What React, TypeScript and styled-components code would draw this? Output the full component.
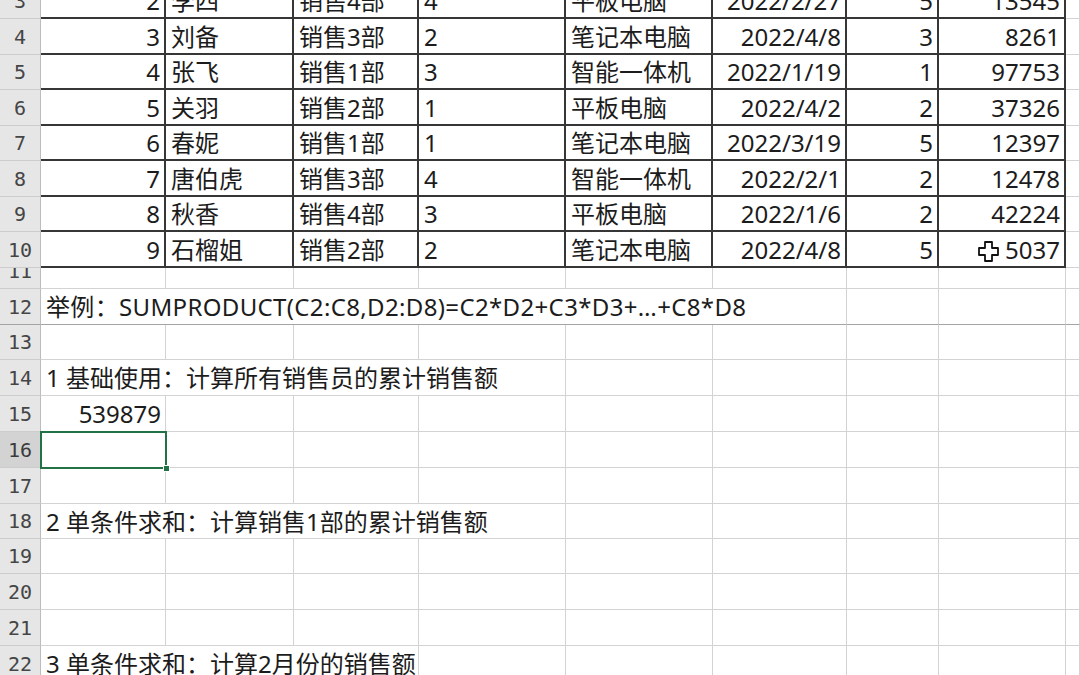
import React from 'react';
import styled, { createGlobalStyle, css } from 'styled-components';

const GlobalStyle = createGlobalStyle`
  html, body { margin: 0; padding: 0; background: #fff; overflow: hidden; }
  body { width: 1080px; height: 675px; }
`;

const COLS = '41px 125px 128px 125px 147px 147px 134px 92px 127px 1fr';

type Edge = 'dark' | 'light' | 'mid' | 'none';

const edge = (e: Edge) => {
  switch (e) {
    case 'dark':
      return '2px solid #363636';
    case 'mid':
      return '1px solid #a4a4a4';
    case 'none':
      return '0';
    default:
      return '1px solid #d3d3d3';
  }
};

const Viewport = styled.div`
  width: 1080px;
  height: 675px;
  overflow: hidden;
  background: #fff;
`;

const Sheet = styled.div`
  display: flex;
  flex-direction: column;
  margin-top: -17px;
  font-family: "Noto Sans", "Noto Sans CJK SC", sans-serif;
  font-size: 24px;
  color: #1c1c1c;
`;

const Row = styled.div<{ $h: number }>`
  display: grid;
  grid-template-columns: ${COLS};
  height: ${(p) => p.$h}px;
  flex: none;
`;

const RowHead = styled.div<{ $sel?: boolean; $bottom?: Edge }>`
  display: flex;
  align-items: flex-end;
  justify-content: center;
  box-sizing: border-box;
  padding-bottom: 7px;
  overflow: hidden;
  background: ${(p) => (p.$sel ? '#d3d3d3' : '#e6e6e6')};
  border-right: 1px solid #bcbcbc;
  border-bottom: ${(p) => (p.$bottom === 'mid' ? '1px solid #a4a4a4' : '1px solid #cccccc')};
  font-family: "DejaVu Sans Mono", monospace;
  font-size: 20px;
  line-height: 20px;
  color: ${(p) => (p.$sel ? '#3b3b3b' : '#454545')};
`;

const Cell = styled.div<{
  $align?: 'left' | 'right';
  $right?: Edge;
  $bottom?: Edge;
  $span?: number;
  $selected?: boolean;
  $track?: number;
}>`
  position: relative;
  box-sizing: border-box;
  display: flex;
  align-items: center;
  justify-content: ${(p) => (p.$align === 'right' ? 'flex-end' : 'flex-start')};
  padding: 1px 4px 0 5px;
  white-space: nowrap;
  line-height: 1;
  min-width: 0;
  letter-spacing: ${(p) => p.$track ?? 0}px;
  grid-column: span ${(p) => p.$span ?? 1};
  border-right: ${(p) => edge(p.$right ?? 'light')};
  border-bottom: ${(p) => edge(p.$bottom ?? 'light')};
  ${(p) =>
    p.$selected &&
    css`
      &::after {
        content: '';
        position: absolute;
        left: -1px;
        top: -1px;
        right: -2px;
        bottom: -2px;
        border: 2px solid #217346;
        pointer-events: none;
      }
      &::before {
        content: '';
        position: absolute;
        right: -5px;
        bottom: -5px;
        width: 5px;
        height: 5px;
        background: #217346;
        border: 1px solid #fff;
        z-index: 2;
      }
    `}
`;

const Cursor = styled.svg`
  position: absolute;
  left: 39px;
  top: 9px;
  width: 21px;
  height: 21px;
`;

type TableRow = {
  n: number;
  h: number;
  no: string;
  name: string;
  dept: string;
  grade: string;
  product: string;
  date: string;
  qty: string;
  amount: string;
  cursor?: boolean;
};

const tableRows: TableRow[] = [
  { n: 3, h: 36, no: '2', name: '李四', dept: '销售4部', grade: '4', product: '平板电脑', date: '2022/2/27', qty: '5', amount: '13545' },
  { n: 4, h: 36, no: '3', name: '刘备', dept: '销售3部', grade: '2', product: '笔记本电脑', date: '2022/4/8', qty: '3', amount: '8261' },
  { n: 5, h: 35, no: '4', name: '张飞', dept: '销售1部', grade: '3', product: '智能一体机', date: '2022/1/19', qty: '1', amount: '97753' },
  { n: 6, h: 36, no: '5', name: '关羽', dept: '销售2部', grade: '1', product: '平板电脑', date: '2022/4/2', qty: '2', amount: '37326' },
  { n: 7, h: 35, no: '6', name: '春妮', dept: '销售1部', grade: '1', product: '笔记本电脑', date: '2022/3/19', qty: '5', amount: '12397' },
  { n: 8, h: 36, no: '7', name: '唐伯虎', dept: '销售3部', grade: '4', product: '智能一体机', date: '2022/2/1', qty: '2', amount: '12478' },
  { n: 9, h: 35, no: '8', name: '秋香', dept: '销售4部', grade: '3', product: '平板电脑', date: '2022/1/6', qty: '2', amount: '42224' },
  { n: 10, h: 36, no: '9', name: '石榴姐', dept: '销售2部', grade: '2', product: '笔记本电脑', date: '2022/4/8', qty: '5', amount: '5037', cursor: true },
];

type FreeRow = {
  n: number;
  h: number;
  text?: string;
  span?: number;
  track?: number;
  value?: string;
  selected?: boolean;
  bottom?: Edge;
};

const freeRows: FreeRow[] = [
  { n: 11, h: 21 },
  { n: 12, h: 36, text: '举例：SUMPRODUCT(C2:C8,D2:D8)=C2*D2+C3*D3+…+C8*D8', span: 6, bottom: 'mid', track: 0.35 },
  { n: 13, h: 35 },
  { n: 14, h: 36, text: '1 基础使用：计算所有销售员的累计销售额', span: 4 },
  { n: 15, h: 36, value: '539879' },
  { n: 16, h: 36, selected: true },
  { n: 17, h: 36 },
  { n: 18, h: 35, text: '2 单条件求和：计算销售1部的累计销售额', span: 4 },
  { n: 19, h: 35 },
  { n: 20, h: 36 },
  { n: 21, h: 36 },
  { n: 22, h: 36, text: '3 单条件求和：计算2月份的销售额', span: 3 },
];

const FatCross = () => (
  <Cursor viewBox="0 0 21 21">
    <polygon
      points="7,1 14,1 14,7 20,7 20,14 14,14 14,20 7,20 7,14 1,14 1,7 7,7"
      fill="#fff"
      stroke="#111"
      strokeWidth="1.8"
      strokeLinejoin="round"
    />
  </Cursor>
);

const DataRow = ({ r }: { r: TableRow }) => (
  <Row $h={r.h}>
    <RowHead>{r.n}</RowHead>
    <Cell $align="right" $right="dark" $bottom="dark">{r.no}</Cell>
    <Cell $right="dark" $bottom="dark">{r.name}</Cell>
    <Cell $right="dark" $bottom="dark">{r.dept}</Cell>
    <Cell $right="dark" $bottom="dark">{r.grade}</Cell>
    <Cell $right="dark" $bottom="dark">{r.product}</Cell>
    <Cell $align="right" $right="dark" $bottom="dark">{r.date}</Cell>
    <Cell $align="right" $right="dark" $bottom="dark">{r.qty}</Cell>
    <Cell $align="right" $right="dark" $bottom="dark">
      {r.cursor && <FatCross />}
      {r.amount}
    </Cell>
    <Cell />
  </Row>
);

const PlainRow = ({ r }: { r: FreeRow }) => {
  const span = r.text ? r.span ?? 1 : 1;
  const rest = 9 - span;
  return (
    <Row $h={r.h}>
      <RowHead $sel={r.selected} $bottom={r.bottom}>{r.n}</RowHead>
      <Cell
        $span={span}
        $align={r.value ? 'right' : 'left'}
        $bottom={r.bottom}
        $selected={r.selected}
        $track={r.track}
      >
        {r.text ?? r.value ?? ''}
      </Cell>
      {Array.from({ length: rest }).map((_, i) => (
        <Cell key={i} $bottom={r.bottom} />
      ))}
    </Row>
  );
};

export default function App() {
  return (
    <Viewport>
      <GlobalStyle />
      <Sheet>
        {tableRows.map((r) => (
          <DataRow key={r.n} r={r} />
        ))}
        {freeRows.map((r) => (
          <PlainRow key={r.n} r={r} />
        ))}
      </Sheet>
    </Viewport>
  );
}
